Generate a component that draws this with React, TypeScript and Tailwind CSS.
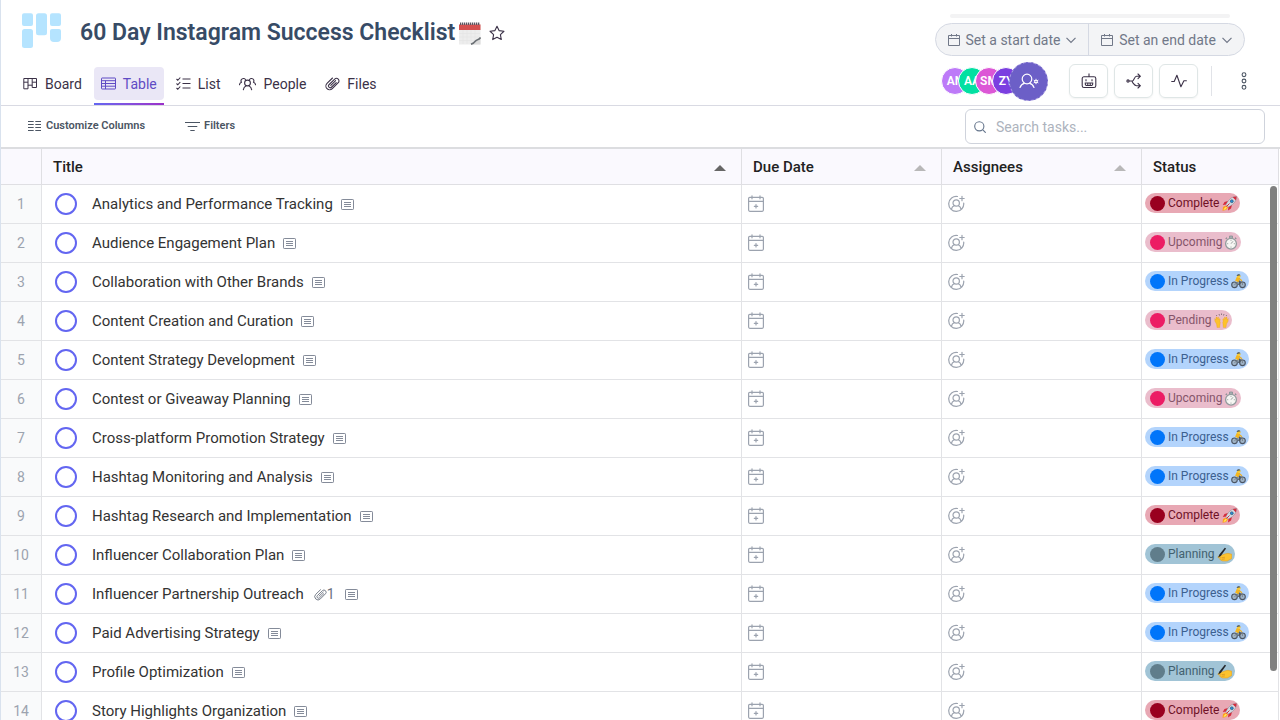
import type { ReactNode } from 'react';

type StatusName = 'Complete' | 'Upcoming' | 'In Progress' | 'Pending' | 'Planning';

type Task = {
  title: string;
  status: StatusName;
  files?: number;
};

const tasks: Task[] = [
  { title: 'Analytics and Performance Tracking', status: 'Complete' },
  { title: 'Audience Engagement Plan', status: 'Upcoming' },
  { title: 'Collaboration with Other Brands', status: 'In Progress' },
  { title: 'Content Creation and Curation', status: 'Pending' },
  { title: 'Content Strategy Development', status: 'In Progress' },
  { title: 'Contest or Giveaway Planning', status: 'Upcoming' },
  { title: 'Cross-platform Promotion Strategy', status: 'In Progress' },
  { title: 'Hashtag Monitoring and Analysis', status: 'In Progress' },
  { title: 'Hashtag Research and Implementation', status: 'Complete' },
  { title: 'Influencer Collaboration Plan', status: 'Planning' },
  { title: 'Influencer Partnership Outreach', status: 'In Progress', files: 1 },
  { title: 'Paid Advertising Strategy', status: 'In Progress' },
  { title: 'Profile Optimization', status: 'Planning' },
  { title: 'Story Highlights Organization', status: 'Complete' },
];

const avatars = [
  { initials: 'AN', color: 'bg-[#bd7af8]' },
  { initials: 'AA', color: 'bg-[#02e0a2]' },
  { initials: 'SM', color: 'bg-[#dc57d6]' },
  { initials: 'ZY', color: 'bg-[#7b3fe0]' },
];

function Logo() {
  return (
    <svg className="w-10 h-9 shrink-0" viewBox="0 0 40 36" fill="#b5e4ff" aria-hidden="true">
      <rect x="1" y="0.3" width="11" height="12.7" rx="2" />
      <rect x="1" y="16" width="11" height="19" rx="2.5" />
      <rect x="15" y="0.3" width="11" height="22" rx="2.5" />
      <rect x="29" y="0.3" width="11" height="12.7" rx="2" />
      <path d="M29 18a2 2 0 0 1 2-2h7a2 2 0 0 1 2 2v7a4 4 0 0 1-4 4h-3a4 4 0 0 1-4-4z" />
    </svg>
  );
}

function NotepadEmoji() {
  return (
    <svg className="w-[22px] h-[23px]" viewBox="0 0 22 23" aria-hidden="true">
      <path d="M0 2h21.500v20.500H0z" fill="#ededed" />
      <path d="M21.500 15.500 13 22.500h8.500z" fill="#dcdcdc" />
      <path d="M0 2.500h21.500V8H0z" fill="#d4504f" />
      <path d="M1 1.800h20" stroke="#5b555f" strokeWidth="2.600" strokeDasharray="1.300 0.700" />
      <path d="M0 11.500h21M0 15h20M0 18.500h17M4 8v14M8 8v14M12 8v14M16 8v12" stroke="#e0e0e0" strokeWidth="0.500" />
      <path d="M21.500 15.500c-2 3-3.500 1.500-5 3.500s-2.500 2.500-4.500 3.300" stroke="#6b7075" strokeWidth="1.600" fill="none" />
    </svg>
  );
}

function StarIcon() {
  return (
    <svg className="w-4 h-4" viewBox="0 0 16 16" fill="none" stroke="#3b3147" strokeWidth="1.100" strokeLinejoin="round" aria-hidden="true">
      <path d="m8 1.200 2.050 4.400 4.900.650-3.550 3.400.9 4.900L8 12.200l-4.300 2.350.9-4.900L1.050 6.250l4.900-.650z" />
    </svg>
  );
}

function BoardIcon() {
  return (
    <svg className="w-[15px] h-[15px]" viewBox="0 0 15 15" fill="none" stroke="currentColor" strokeWidth="1" aria-hidden="true">
      <path d="M.800 2.500h12.700v9H9.200V9.200H5v3.600H.800zM5 2.500v7M9.200 2.500v7M.800 6.200H5M9.200 6.200h4.300" />
    </svg>
  );
}

function TableIcon() {
  return (
    <svg className="w-[15px] h-[15px]" viewBox="0 0 15 15" fill="none" stroke="currentColor" strokeWidth="1" aria-hidden="true">
      <rect x=".5" y="2" width="14" height="11" rx="0.500" />
      <path d="M.5 4.700h14M.5 7.500h14M.5 10.200h14M4.500 4.700V13" />
    </svg>
  );
}

function ListIcon() {
  return (
    <svg className="w-[15px] h-[15px]" viewBox="0 0 15 15" fill="none" stroke="currentColor" strokeWidth="1.100" aria-hidden="true">
      <path d="M6.500 3h8M6.500 7.500h8M6.500 12h8M.5 3l1.300 1.300L4.300 1.500M.5 7.500l1.300 1.300L4.300 6M.5 12l1.300 1.300 2.500-2.800" />
    </svg>
  );
}

function PeopleIcon() {
  return (
    <svg className="w-[17px] h-[15px]" viewBox="0 0 17 15" fill="none" stroke="currentColor" strokeWidth="1.100" strokeLinecap="round" aria-hidden="true">
      <circle cx="8.500" cy="7" r="2.900" />
      <path d="M4.300 13.800c.3-1.800 1.300-3 2.500-3.700M12.700 13.800c-.3-1.800-1.300-3-2.500-3.700M6.500 3.500a2.300 2.300 0 1 0-4 2.700M2.500 6.300C1.300 6.700.600 7.500.500 8.800M10.500 3.500a2.300 2.300 0 1 1 4 2.700M14.500 6.300c1.200.4 1.900 1.200 2 2.500" />
    </svg>
  );
}

function ClipIcon({ className }: { className: string }) {
  return (
    <svg className={className} viewBox="0 0 24 24" fill="none" stroke="currentColor" strokeWidth="1.700" strokeLinecap="round" aria-hidden="true">
      <path d="M18 10.500 10.300 18a2.800 2.800 0 0 1-4-4l9.200-9a4 4 0 0 1 5.700 5.700l-9.500 9.500a6 6 0 0 1-8.500-8.500L12 3.200M9.300 15l7.700-7.500" />
    </svg>
  );
}

function CalendarIcon() {
  return (
    <svg className="w-3 h-3 shrink-0" viewBox="0 0 12 12" fill="none" stroke="currentColor" strokeWidth="1" aria-hidden="true">
      <path d="M.500 1.500h11v10H.500zM.500 4.500h11M3.500 0v2.500M8.500 0v2.500" />
    </svg>
  );
}

function ChevronIcon() {
  return (
    <svg className="w-2.5 h-2.5 shrink-0" viewBox="0 0 10 10" fill="none" stroke="currentColor" strokeWidth="1.200" aria-hidden="true">
      <path d="m.5 2.800 4.500 4.700 4.500-4.700" />
    </svg>
  );
}

function UserGearIcon() {
  return (
    <svg className="w-5 h-4" viewBox="0 0 20 16" fill="none" stroke="#fff" strokeWidth="1.200" strokeLinecap="round" aria-hidden="true">
      <circle cx="8" cy="6" r="4.800" />
      <path d="M1 14.500c.8-2.100 2.200-3.700 4.300-4.200M15 14.500c-.8-2.100-2.200-3.700-4.300-4.200" />
      <circle cx="17" cy="8.500" r="1.300" strokeWidth="1.100" />
      <path d="M17 6.200v.8M17 10v.8M15 7.300l.7.400M18.300 9.300l.7.400M19 7.300l-.7.400M15.700 9.300l-.7.400" strokeWidth=".9" />
    </svg>
  );
}

function RobotIcon() {
  return (
    <svg className="w-4 h-4" viewBox="0 0 16 16" fill="none" stroke="currentColor" strokeWidth="1.100" aria-hidden="true">
      <rect x="1.200" y="3.800" width="13.600" height="10.700" rx="1.800" />
      <path d="M8 4V.500M5 6.200v2M11 6.200v2" />
      <path d="M4.300 10h7.400v1a1.500 1.500 0 0 1-1.500 1.500H5.800A1.500 1.500 0 0 1 4.300 11zM6.800 10v2.500M9.200 10v2.500" />
    </svg>
  );
}

function BranchIcon() {
  return (
    <svg className="w-4 h-4" viewBox="0 0 16 16" fill="none" stroke="currentColor" strokeWidth="1.100" strokeLinecap="round" aria-hidden="true">
      <circle cx="2" cy="8" r="1.100" />
      <path d="M3.300 8h3.200M14 3.300h-3.500C8.500 3.300 7.800 8 6.500 8s2 4.700 4 4.700H14M12 1l2.300 2.300L12 5.600M12 10.400l2.300 2.300L12 15" />
    </svg>
  );
}

function PulseIcon() {
  return (
    <svg className="w-4 h-4" viewBox="0 0 16 16" fill="none" stroke="currentColor" strokeWidth="1.100" strokeLinejoin="round" strokeLinecap="round" aria-hidden="true">
      <path d="M.700 8.500h2.500l2.700-6.200 4 11.500 3-6h2.500" />
    </svg>
  );
}

function DotsIcon() {
  return (
    <svg className="w-1.5 h-[18px]" viewBox="0 0 6 18" fill="none" stroke="#4b5563" strokeWidth="1.100" aria-hidden="true">
      <circle cx="3" cy="2.700" r="1.900" />
      <circle cx="3" cy="9" r="1.900" />
      <circle cx="3" cy="15.300" r="1.900" />
    </svg>
  );
}

function SearchIcon() {
  return (
    <svg className="w-3 h-3 shrink-0" viewBox="0 0 12 12" fill="none" stroke="#64748b" strokeWidth="1.100" aria-hidden="true">
      <circle cx="5.300" cy="5.300" r="4.600" />
      <path d="m8.800 8.800 2.900 2.900" />
    </svg>
  );
}

function NoteIcon() {
  return (
    <svg className="w-[13px] h-[11px]" viewBox="0 0 13 11" fill="none" stroke="#848b99" strokeWidth="1" aria-hidden="true">
      <rect x=".5" y=".5" width="12" height="10" rx=".7" />
      <path d="M3 3.500h7M3 5.500h7M3 7.500h7" />
    </svg>
  );
}

function AddDateIcon() {
  return (
    <svg className="w-4 h-[17px]" viewBox="0 0 16 17" fill="none" stroke="#9ca3af" strokeWidth="1.200" strokeLinecap="round" aria-hidden="true">
      <rect x=".6" y="2.300" width="14.800" height="14" rx="1.200" />
      <path d="M.800 6.300h14.400M4 .800v3M12 .800v3M6.300 11.300h3.400M8 9.600V13" />
    </svg>
  );
}

function AddUserIcon() {
  return (
    <svg className="w-[17px] h-[17px]" viewBox="0 0 17 17" fill="none" stroke="#9ca3af" strokeWidth="1.200" strokeLinecap="round" aria-hidden="true">
      <path d="M9.500 1.500A7.500 7.500 0 1 0 15.700 8M14 1.300v4.400M11.800 3.500h4.400M3.500 14c.4-1.700 1.300-2.700 2.700-3.200M13 14c-.4-1.700-1.300-2.700-2.700-3.200" />
      <circle cx="8.200" cy="8" r="3.200" />
    </svg>
  );
}

function RocketEmoji() {
  return (
    <svg className="w-[15px] h-[15px]" viewBox="0 0 15 15" aria-hidden="true">
      <path d="M6 5 2.500 6 .8 9l3.500-.5zM10 9l-1 3.500-3 2 .5-4z" fill="#d52b3c" />
      <path d="M4 9.500 1 11l-.500 3.800L4 14l2-2.500z" fill="#ff9d1c" />
      <path d="M4 10.500 2 12.500l-.5 1.500 2-.5 1.500-2z" fill="#ffe35a" />
      <path d="M14.500.500C10 .500 7 3 4 8.500L6.500 11C12 8 14.500 5 14.500.500z" fill="#d3dbe3" stroke="#69747f" strokeWidth=".4" />
      <path d="M14.500.500c-1.500 0-2.700.2-3.800.8l3 3c.6-1.200.8-2.400.8-3.800z" fill="#d52b3c" />
      <circle cx="9.800" cy="5.200" r="1.500" fill="#268bd2" stroke="#334155" strokeWidth=".5" />
      <path d="m4.500 10.500 3-3" stroke="#d52b3c" strokeWidth="1" />
    </svg>
  );
}

function StopwatchEmoji() {
  return (
    <svg className="w-[14px] h-[15px]" viewBox="0 0 14 15" aria-hidden="true">
      <path d="M5.500 1h3v2.500h-3z" fill="#a9b0b2" stroke="#868f92" strokeWidth=".8" />
      <path d="m11 2.700 1.300 1.200M3 2.700 1.700 3.900" stroke="#868f92" strokeWidth="1.200" />
      <circle cx="7" cy="8.700" r="5.400" fill="#f6f6f3" stroke="#929b9d" strokeWidth="1.300" />
      <path d="M7 8.700 9 6.300M7 4.800v1M7 11.600v1M3.200 8.700h1M9.800 8.700h1" stroke="#70787a" strokeWidth=".7" />
    </svg>
  );
}

function CyclistEmoji() {
  return (
    <svg className="w-[15px] h-[15px]" viewBox="0 0 15 15" fill="none" aria-hidden="true">
      <circle cx="3.500" cy="10.800" r="2.800" fill="#9fb3c6" stroke="#4b5563" strokeWidth="1.100" />
      <circle cx="11.500" cy="10.800" r="2.800" fill="#9fb3c6" stroke="#4b5563" strokeWidth="1.100" />
      <path d="M3.500 11 6 8l2 3 3-4 .5 4M6 8h4" stroke="#737b82" strokeWidth=".8" />
      <path d="m6.500 6 2.500 2-1 3" stroke="#4d5760" strokeWidth="1.700" />
      <path d="M7.500 3.500 5.800 7.500" stroke="#f5b61f" strokeWidth="3.600" />
      <path d="m8 4.500 3 2.200" stroke="#ecae22" strokeWidth="1.300" />
      <circle cx="7.800" cy="2.300" r="1.700" fill="#f9c931" />
      <path d="M5.600 2a2.200 2.200 0 0 1 4-.8z" fill="#46525e" />
    </svg>
  );
}

function HandsEmoji() {
  return (
    <svg className="w-[15px] h-[15px]" viewBox="0 0 15 15" aria-hidden="true">
      <path d="M5.500 2.500 5 1M7.500 2V.5M9.500 2.500 10 1M3 3l-.8-1M12 3l.8-1" stroke="#64585e" strokeWidth=".7" />
      <path d="M3 14.500 2.500 11 .8 8V5.500l1 1.500.3-3 .9.1.2 2 .7-2 .8.3-.2 2.500 1-1.300.7.500-.3 2.500.4.500L6 11.500l-.3 3zM12 14.500l.5-3.500 1.700-3V5.500l-1 1.500-.3-3-.9.1-.2 2-.7-2-.8.3.2 2.500-1-1.300-.7.500.3 2.500-.4.500.300 2.400.3 3z" fill="#fdc22d" stroke="#e69b1c" strokeWidth=".3" />
    </svg>
  );
}

function WritingEmoji() {
  return (
    <svg className="w-[15px] h-[15px]" viewBox="0 0 15 15" aria-hidden="true">
      <path d="M14.800 7.200 11 6.300 8.500 6.800 5 8 1.500 9.300c-1 .5-.8 1.500.300 1.500l2-.2-1 .9c-.5.7.1 1.300.900 1.100-.2.700.5 1.100 1.200.9l.8.5h4.500l4.600-2.500z" fill="#fdc32e" stroke="#e09a1c" strokeWidth=".5" />
      <path d="m1.200 10.500 1-2.700L7.800.700l1.300.9-5.300 7.300z" fill="#25282c" />
      <path d="m4.500 10.700 3.500-.5M4.700 12.300l3.200-.4" stroke="#d08a1c" strokeWidth=".6" />
    </svg>
  );
}

const statuses: Record<StatusName, { pill: string; dot: string; emoji: ReactNode }> = {
  Complete: { pill: 'bg-[#e8a8b4] text-[#6f1026]', dot: 'bg-[#99001f]', emoji: <RocketEmoji /> },
  Upcoming: { pill: 'bg-[#eabdcc] text-[#85546a]', dot: 'bg-[#ec1c64]', emoji: <StopwatchEmoji /> },
  'In Progress': { pill: 'bg-[#b3d4fc] text-[#3c6090]', dot: 'bg-[#0075fa]', emoji: <CyclistEmoji /> },
  Pending: { pill: 'bg-[#eabdcc] text-[#85546a]', dot: 'bg-[#ec1c64]', emoji: <HandsEmoji /> },
  Planning: { pill: 'bg-[#a1c4d6] text-[#41616f]', dot: 'bg-[#607d8b]', emoji: <WritingEmoji /> },
};

function StatusPill({ name }: { name: StatusName }) {
  const status = statuses[name];

  return (
    <button className={`flex h-5 items-center gap-0.5 rounded-full pl-[5px] pr-[3px] text-xs whitespace-nowrap ${status.pill}`}>
      <span className={`w-[15px] h-[15px] mr-px shrink-0 rounded-full ${status.dot}`} />
      {name}
      {status.emoji}
    </button>
  );
}

function Tab({ label, icon, active = false }: { label: string; icon: ReactNode; active?: boolean }) {
  return (
    <a href="#" className="flex flex-col justify-between h-[38px]" aria-current={active ? 'page' : undefined}>
      <span
        className={
          active
            ? 'flex items-center gap-[7px] h-[33px] rounded px-[7px] bg-[#eae7f6] text-[#5f4bc4]'
            : 'flex items-center gap-[7px] h-[33px] rounded px-[7px] text-[#3b3147]'
        }
      >
        {icon}
        {label}
      </span>
      {active && <span className="h-0.5 bg-linear-to-r from-[#6366f1] to-[#9b2fc9]" />}
    </a>
  );
}

function HeaderCell({ label, sort }: { label: string; sort?: 'active' | 'idle' }) {
  return (
    <th scope="col" className="h-9 border-b border-r border-[#dfdfe3] pt-0.5 pl-[11px] pr-[15px] text-left font-medium">
      <div className="flex items-center justify-between">
        {label}
        {sort && (
          <button aria-label={`Sort by ${label}`} className={sort === 'active' ? 'text-[#666666]' : 'text-[#b8b8b8]'}>
            <svg className="w-3 h-1.5" viewBox="0 0 12 6" fill="currentColor" aria-hidden="true">
              <path d="M6 0l6 6H0z" />
            </svg>
          </button>
        )}
      </div>
    </th>
  );
}

function TaskRow({ task, index }: { task: Task; index: number }) {
  return (
    <tr className="h-[39px]">
      <td className="border-b border-r border-[#e2e3e6] bg-[#f9fafb] text-center text-sm text-[#9ca3af]">{index}</td>
      <td className="border-b border-r border-[#e2e3e6] pl-[13px]">
        <div className="flex items-center">
          <input
            type="checkbox"
            aria-label={`Complete ${task.title}`}
            className="appearance-none w-[22px] h-[22px] shrink-0 rounded-full border-2 border-[#6366f1]"
          />
          <span className="pl-[15px] pr-2">{task.title}</span>
          {task.files && (
            <span className="flex items-center pl-0.5 pr-2.5 text-sm text-[#6b7280]">
              <ClipIcon className="w-[13px] h-[13px]" />
              {task.files}
            </span>
          )}
          <NoteIcon />
        </div>
      </td>
      <td className="border-b border-r border-[#e2e3e6] pl-1.5 pb-0.5">
        <button aria-label="Set due date" className="block">
          <AddDateIcon />
        </button>
      </td>
      <td className="border-b border-r border-[#e2e3e6] pl-1.5 pb-0.5">
        <button aria-label="Add assignee" className="block">
          <AddUserIcon />
        </button>
      </td>
      <td className="border-b border-r border-[#e2e3e6] pl-[3px] pb-0.5">
        <StatusPill name={task.status} />
      </td>
    </tr>
  );
}

function ProjectHeader() {
  return (
    <header className="flex justify-between border-b border-[#d9dae3]">
      <div className="flex flex-col justify-between pt-[13px]">
        <div className="flex h-10 items-center pl-5">
          <div className="self-start">
            <Logo />
          </div>
          <h1 className="flex items-center gap-1 pl-[19px] text-[23px] leading-10 font-semibold text-[#374b66] whitespace-nowrap">
            60 Day Instagram Success Checklist
            <NotepadEmoji />
          </h1>
          <button aria-label="Add to favorites" className="pl-2">
            <StarIcon />
          </button>
        </div>
        <nav className="flex gap-[5px] pl-[15px] text-sm">
          <Tab label="Board" icon={<BoardIcon />} />
          <Tab label="Table" icon={<TableIcon />} active />
          <Tab label="List" icon={<ListIcon />} />
          <Tab label="People" icon={<PeopleIcon />} />
          <Tab label="Files" icon={<ClipIcon className="w-[15px] h-[15px]" />} />
        </nav>
      </div>

      <div className="flex flex-col items-end pt-3.5 pb-[5px] pr-[35px]">
        <div className="h-1 w-[280px] mr-[15px] rounded-full bg-[#f3f3f4]" />
        <div className="mt-[5px] flex h-[33px] rounded-full border border-[#d5d9e3] bg-[#f3f4f6] text-sm text-[#717888]">
          <button className="flex w-[153px] items-center justify-center gap-1.5 border-r border-[#d5d9e3] whitespace-nowrap">
            <CalendarIcon />
            Set a start date
            <ChevronIcon />
          </button>
          <button className="flex w-[155px] items-center justify-center gap-1.5 whitespace-nowrap">
            <CalendarIcon />
            Set an end date
            <ChevronIcon />
          </button>
        </div>
        <div className="mt-1.5 -mr-0.5 flex h-[38px] items-center text-[#3b3147]">
          {avatars.map((avatar) => (
            <span
              key={avatar.initials}
              className={`flex w-7 h-7 -mr-[11px] items-center justify-center rounded-full border border-white text-xs font-semibold text-white ${avatar.color}`}
            >
              {avatar.initials}
            </span>
          ))}
          <button
            aria-label="Manage members"
            className="flex w-[39px] h-[39px] items-center justify-center rounded-full border border-dashed border-[#a79be0] bg-[#6c5fc7]"
          >
            <UserGearIcon />
          </button>
          <div className="flex gap-1.5 pl-[21px]">
            <button aria-label="Automations" className="flex w-[39px] h-[34px] items-center justify-center rounded-md border border-[#dfe6e6] shadow-xs">
              <RobotIcon />
            </button>
            <button aria-label="Share" className="flex w-[39px] h-[34px] items-center justify-center rounded-md border border-[#dfe6e6] shadow-xs">
              <BranchIcon />
            </button>
            <button aria-label="Activity" className="flex w-[39px] h-[34px] items-center justify-center rounded-md border border-[#dfe6e6] shadow-xs">
              <PulseIcon />
            </button>
          </div>
          <span className="ml-[13px] h-[30px] w-px bg-[#e1e3e8]" />
          <button aria-label="More options" className="pl-[29px]">
            <DotsIcon />
          </button>
        </div>
      </div>
    </header>
  );
}

function Toolbar() {
  return (
    <div className="flex items-center justify-between border-b-2 border-[#dcdde0] py-[3px] pl-[27px] pr-[15px] text-[11px] font-semibold text-[#4b5563]">
      <div className="flex gap-10">
        <button className="flex items-center gap-[5px]">
          <svg className="w-[13px] h-[11px]" viewBox="0 0 13 11" stroke="currentColor" strokeWidth="1" aria-hidden="true">
            <path d="M0 .5h5.700M7.300 .5H13M0 3.500h5.700M7.300 3.500H13M0 6.500h5.700M7.300 6.500H13M0 9.500h5.700M7.300 9.500H13" />
          </svg>
          Customize Columns
        </button>
        <button className="flex items-center gap-1">
          <svg className="w-[15px] h-[9px]" viewBox="0 0 15 9" stroke="currentColor" strokeWidth="1" aria-hidden="true">
            <path d="M0 .5h15M2.700 4.500h9.600M5.300 8.500h4.400" />
          </svg>
          Filters
        </button>
      </div>
      <label className="flex h-[35px] w-[300px] items-center gap-2.5 rounded-md border border-[#cfd3dc] px-2 text-sm font-normal">
        <SearchIcon />
        <input
          type="search"
          aria-label="Search tasks"
          placeholder="Search tasks..."
          className="min-w-0 flex-1 outline-none placeholder:text-[#adb3bd]"
        />
      </label>
    </div>
  );
}

export default function App() {
  return (
    <div className="flex h-screen flex-col overflow-hidden border-l border-[#d9e2ee] bg-white font-[Roboto,sans-serif]">
      <ProjectHeader />
      <Toolbar />
      <main className="relative min-h-0 flex-1 overflow-hidden pr-px">
        <table className="w-full table-fixed border-separate border-spacing-0 text-[15px] text-[#333333]">
          <colgroup>
            <col className="w-[41px]" />
            <col />
            <col className="w-[200px]" />
            <col className="w-[200px]" />
            <col className="w-[137px]" />
          </colgroup>
          <thead className="bg-[#faf9fe] text-[#222222]">
            <tr>
              <th className="border-b border-r border-[#dfdfe3]" aria-label="Row number" />
              <HeaderCell label="Title" sort="active" />
              <HeaderCell label="Due Date" sort="idle" />
              <HeaderCell label="Assignees" sort="idle" />
              <HeaderCell label="Status" />
            </tr>
          </thead>
          <tbody>
            {tasks.map((task, i) => (
              <TaskRow key={task.title} task={task} index={i + 1} />
            ))}
          </tbody>
        </table>
        <div className="absolute top-[37px] right-[3px] h-[85%] w-[7px] rounded-full bg-[#808080]" />
      </main>
    </div>
  );
}
